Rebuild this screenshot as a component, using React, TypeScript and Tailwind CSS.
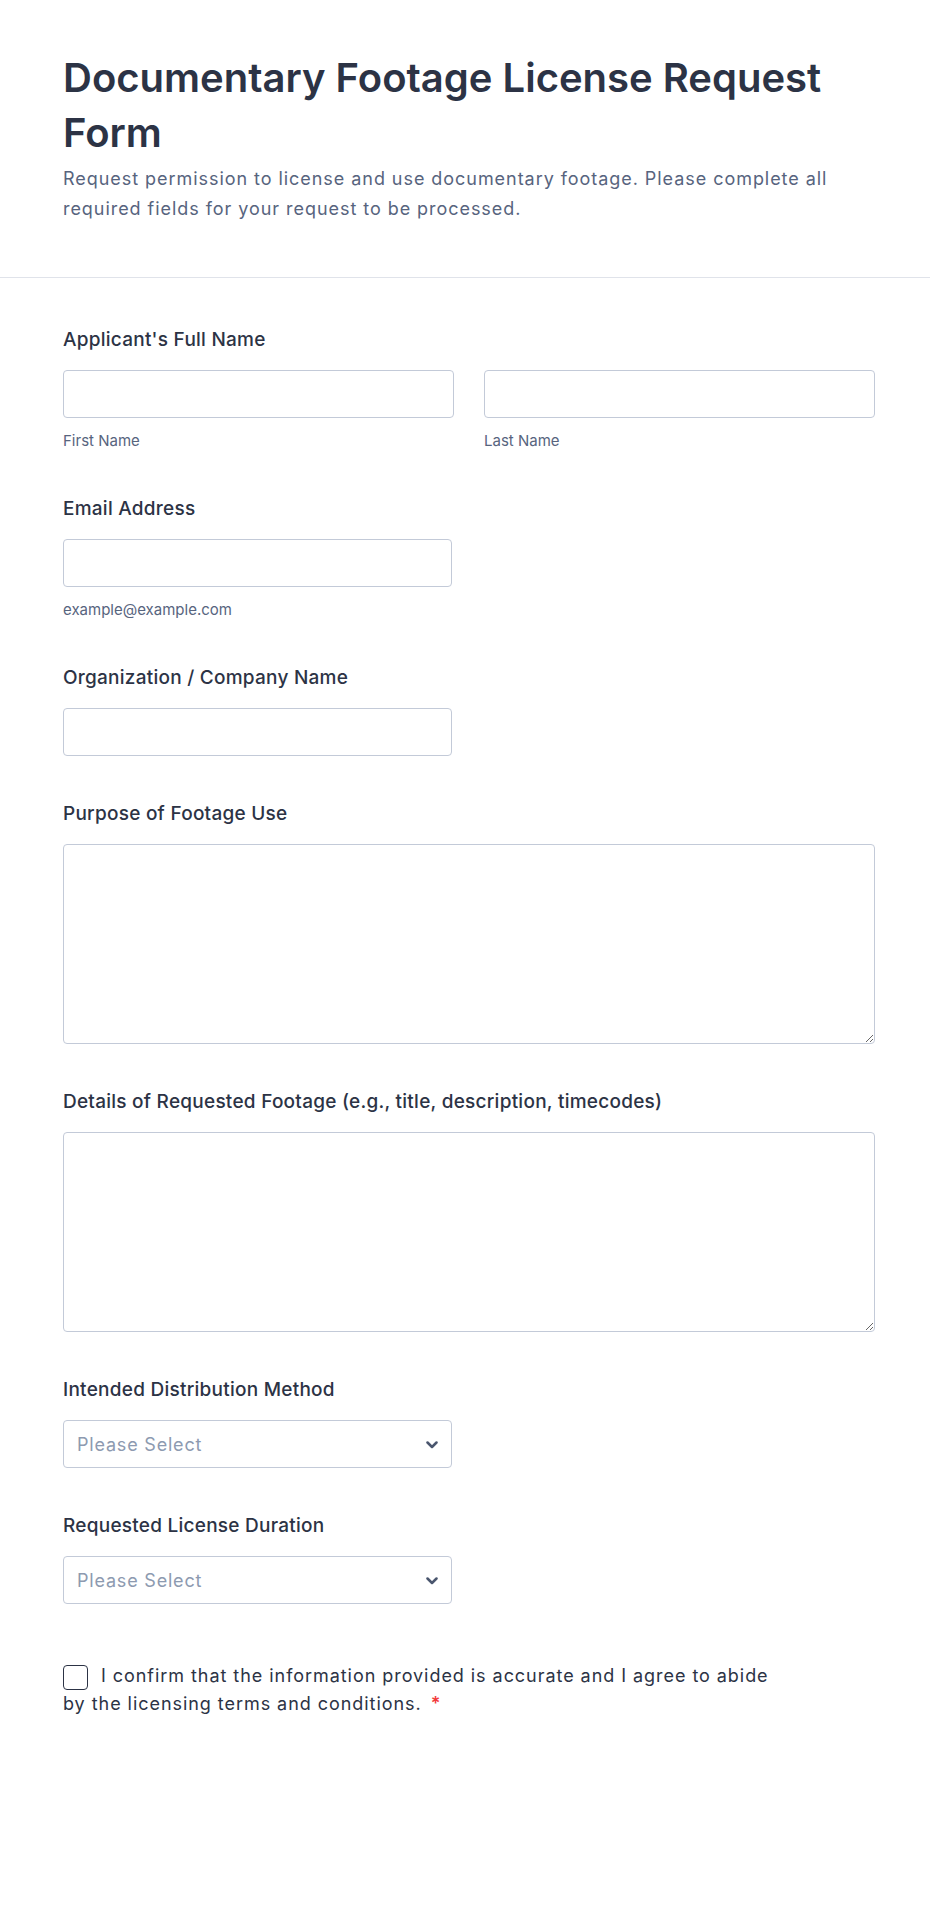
import { type FC, type ReactNode } from "react";

interface FieldProps {
  label: string;
  children: ReactNode;
}

const Field: FC<FieldProps> = ({ label, children }) => {
  return (
    <div className="py-[23px]">
      <label className="mb-[18px] block text-[19px] font-medium leading-[24px] tracking-[0.25px] text-[#2c3345]">
        {label}
      </label>
      {children}
    </div>
  );
};

const SubLabel: FC<{ text: string }> = ({ text }) => (
  <p className="mt-[13px] text-[15px] leading-[20px] text-[#57647e]">{text}</p>
);

const inputClass =
  "block h-[48px] w-full rounded-[4px] border border-[#c3cad8] bg-white px-[13px] text-[18px] text-[#2c3345] outline-none";

const SelectBox: FC = () => (
  <div className="relative w-[389px]">
    <select
      defaultValue=""
      className="block h-[48px] w-full appearance-none rounded-[4px] border border-[#c3cad8] bg-white pl-[13px] pr-[40px] text-[18px] tracking-[0.8px] text-[#8d9ab0] outline-none"
    >
      <option value="">Please Select</option>
    </select>
    <svg
      className="pointer-events-none absolute right-[14px] top-[21px]"
      width="12"
      height="8"
      viewBox="0 0 12 8"
      fill="none"
    >
      <path d="M1.5 1.5l4.5 4.5 4.5-4.5" stroke="#4a566e" strokeWidth="2.5" strokeLinecap="round" strokeLinejoin="round" />
    </svg>
  </div>
);

const App: FC = () => {
  return (
    <div className="min-h-[1925px] bg-white font-['Inter','Noto_Sans',sans-serif] text-[#2c3345]">
      <header className="border-b border-[#e0e3ea] pb-[53px] pl-[63px] pr-[55px] pt-[50px]">
        <h1 className="text-[40px] font-semibold leading-[55px] text-[#2c3345]">
          Documentary Footage License Request Form
        </h1>
        <p className="mt-[4px] text-[18px] leading-[30px] tracking-[0.95px] text-[#57647e]">
          Request permission to license and use documentary footage. Please complete all required fields for your
          request to be processed.
        </p>
      </header>

      <form className="pl-[63px] pr-[55px] pt-[27px]">
        <Field label="Applicant's Full Name">
          <div className="flex gap-[30px]">
            <div className="flex-1">
              <input className={inputClass} />
              <SubLabel text="First Name" />
            </div>
            <div className="flex-1">
              <input className={inputClass} />
              <SubLabel text="Last Name" />
            </div>
          </div>
        </Field>

        <Field label="Email Address">
          <div className="w-[389px]">
            <input type="email" className={inputClass} />
            <SubLabel text="example@example.com" />
          </div>
        </Field>

        <Field label="Organization / Company Name">
          <div className="w-[389px]">
            <input className={inputClass} />
          </div>
        </Field>

        <Field label="Purpose of Footage Use">
          <textarea className="block h-[200px] w-full rounded-[4px] border border-[#c3cad8] bg-white p-[13px] text-[18px] outline-none" />
        </Field>

        <Field label="Details of Requested Footage (e.g., title, description, timecodes)">
          <textarea className="block h-[200px] w-full rounded-[4px] border border-[#c3cad8] bg-white p-[13px] text-[18px] outline-none" />
        </Field>

        <Field label="Intended Distribution Method">
          <SelectBox />
        </Field>

        <Field label="Requested License Duration">
          <SelectBox />
        </Field>

        <div className="py-[23px]">
          <label className="mt-[12px] block w-[712px] text-[18px] leading-[28px] tracking-[0.95px] text-[#2c3345]">
            <span className="mr-[13px] inline-block h-[25px] w-[25px] rounded-[4px] border-[1.5px] border-[#2c3345] bg-white align-middle" />
            I confirm that the information provided is accurate and I agree to abide by the licensing terms and
            conditions.
            <span className="ml-[9px] font-semibold text-[#f23a3c]">*</span>
          </label>
        </div>
      </form>
    </div>
  );
};

export default App;
